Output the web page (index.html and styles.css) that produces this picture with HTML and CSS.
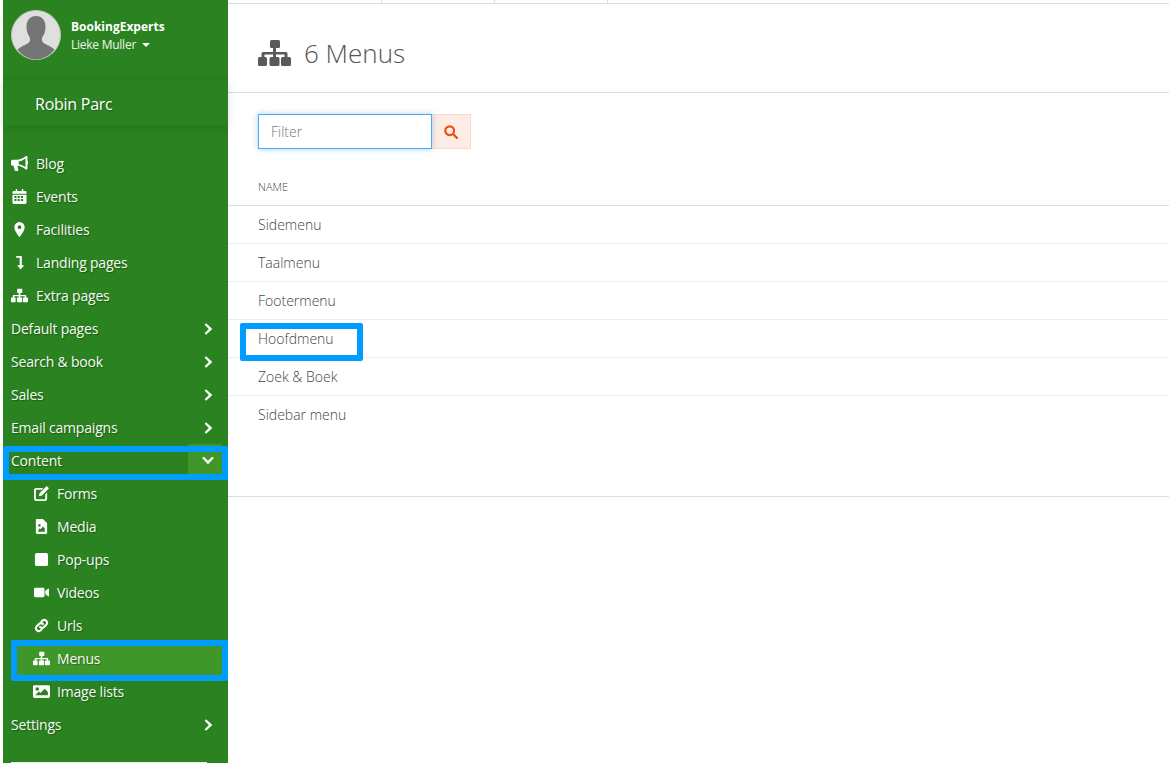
FILE: index.html
```html
<!DOCTYPE html>
<html lang="en">
<head>
<meta charset="utf-8">
<title>6 Menus</title>
<link rel="stylesheet" href="styles.css">
</head>
<body>
<svg class="defs" aria-hidden="true">
  <symbol id="i-sitemap" viewBox="0 0 33 26">
    <path d="M13.500 0h7a1.500 1.500 0 0 1 1.500 1.500v5A1.500 1.500 0 0 1 20.500 8H18v4h10a1.500 1.500 0 0 1 1.500 1.500V17h2a1.500 1.500 0 0 1 1.500 1.500v6a1.500 1.500 0 0 1-1.500 1.500h-7a1.500 1.500 0 0 1-1.500-1.500v-6a1.500 1.500 0 0 1 1.500-1.500h2v-2.500H18V17h2a1.500 1.500 0 0 1 1.500 1.500v6A1.500 1.500 0 0 1 20 26h-7a1.500 1.500 0 0 1-1.500-1.500v-6A1.500 1.500 0 0 1 13 17h2v-2.500H6.500V17h1a1.500 1.500 0 0 1 1.500 1.500v6A1.500 1.500 0 0 1 7.500 26h-6A1.500 1.500 0 0 1 0 24.500v-6A1.500 1.500 0 0 1 1.500 17h2v-3.500A1.500 1.500 0 0 1 5 12h10V8h-1.500A1.500 1.500 0 0 1 12 6.500v-5A1.500 1.500 0 0 1 13.500 0z"/>
  </symbol>
  <symbol id="i-chev-r" viewBox="0 0 12 16">
    <path d="M2.500 1 10 8l-7.500 7L.8 13l5-5-5-5z"/>
  </symbol>
  <symbol id="i-chev-d" viewBox="0 0 16 12">
    <path d="M1 2.500 3 .8l5 5 5-5 2 1.700L8 10z"/>
  </symbol>
</svg>

<div class="app">
  <aside class="sidebar">
    <header class="profile">
      <svg class="avatar" viewBox="0 0 50 50" role="img" aria-label="Avatar">
        <circle cx="25" cy="25" r="24.500" fill="#dfdfdf" stroke="#bcc9b6"/>
        <path d="M25 6c6 0 9.500 4.500 9.500 10.500 0 4-1 7.500-3 10.500-1 1.500-.8 4 .5 5.500 3 2.500 8.500 4 11.500 7A24.500 24.500 0 0 1 25 49.500 24.500 24.500 0 0 1 6.500 39.500c3-3 8.500-4.500 11.500-7 1.300-1.500 1.500-4 .5-5.500-2-3-3-6.500-3-10.500C15.500 10.500 19 6 25 6z" fill="#757575"/>
      </svg>
      <div class="who">
        <div class="company">BookingExperts</div>
        <div class="user">Lieke Muller <span class="caret"></span></div>
      </div>
    </header>

    <div class="park">Robin Parc</div>

    <nav class="nav">
      <a class="item">
        <svg class="ico" viewBox="0 0 16 14"><path d="M14 0h.6c.5 0 .9.400.9.900V4.700a1.800 1.800 0 0 1 0 3.200v3.800c0 .5-.4.900-.9.900H14c-2.300-2-5-3.300-8-3.500L7 13c.1.600-.3 1-.8 1H4.300c-.4 0-.7-.2-.8-.6L2.400 9.100H1.500C.7 9.100 0 8.400 0 7.600V5c0-.8.700-1.500 1.500-1.500H6C9 3.300 11.700 2 14 0zm-.4 2.200C11.700 3.600 9.600 4.600 7.300 5v2.600c2.300.4 4.400 1.400 6.300 2.800z" fill-rule="evenodd"/></svg>
        <span>Blog</span>
      </a>
      <a class="item">
        <svg class="ico" viewBox="0 0 16 16"><path d="M4 0h1.500v2h5V0H12v2h2.200c.7 0 1.300.6 1.300 1.300V5H.5V3.300C.5 2.600 1.100 2 1.800 2H4zM.5 6h15v8.700c0 .7-.6 1.300-1.300 1.300H1.800c-.7 0-1.300-.6-1.300-1.300zm2 1.500v2h2.300v-2zm3.500 0v2h2.300v-2zm3.500 0v2h2.300v-2zm-7 3.200v2h2.300v-2zm3.500 0v2h2.300v-2zm3.500 0v2h2.300v-2z" fill-rule="evenodd"/></svg>
        <span>Events</span>
      </a>
      <a class="item">
        <svg class="ico" viewBox="0 0 16 16"><path d="M8 0a5.500 5.500 0 0 1 5.500 5.500C13.500 9 10 13.500 8 16 6 13.500 2.500 9 2.500 5.500A5.500 5.500 0 0 1 8 0zm0 3.500a2 2 0 1 0 0 4 2 2 0 0 0 0-4z" fill-rule="evenodd"/></svg>
        <span>Facilities</span>
      </a>
      <a class="item">
        <svg class="ico" viewBox="0 0 16 16"><path d="M4.500 1h6v10H13l-3.800 4.500L5.500 11h2.700V3H4.500z"/></svg>
        <span>Landing pages</span>
      </a>
      <a class="item">
        <svg class="ico"><use href="#i-sitemap"/></svg>
        <span>Extra pages</span>
      </a>
      <a class="item parent"><span>Default pages</span><svg class="chev"><use href="#i-chev-r"/></svg></a>
      <a class="item parent"><span>Search &amp; book</span><svg class="chev"><use href="#i-chev-r"/></svg></a>
      <a class="item parent"><span>Sales</span><svg class="chev"><use href="#i-chev-r"/></svg></a>
      <a class="item parent"><span>Email campaigns</span><svg class="chev"><use href="#i-chev-r"/></svg></a>
      <a class="item parent open">
        <span>Content</span>
        <span class="toggle"><svg class="chev-d"><use href="#i-chev-d"/></svg></span>
        <span class="mark mark-content"></span>
      </a>
      <a class="item sub">
        <svg class="ico" viewBox="0 0 16 16"><path d="M2.300 2H10L8 4H2.800c-.4 0-.8.400-.8.800v8.400c0 .4.400.8.800.8h8.400c.4 0 .8-.4.800-.8V9l2-2v6.700c0 1.300-1 2.300-2.300 2.300H2.300C1 16 0 15 0 13.700V4.300C0 3 1 2 2.300 2zM13.500 0 16 2.500 8.500 10l-3.300.8.800-3.300z"/></svg>
        <span>Forms</span>
      </a>
      <a class="item sub">
        <svg class="ico" viewBox="0 0 16 16"><path d="M3 0h6.500L14 4.500v10.200c0 .7-.6 1.300-1.300 1.300H3.300C2.600 16 2 15.400 2 14.700V1c0-.6.500-1 1-1zm1.500 5.500v2.500h2.500V5.500zM4 13.500h7.500V10L9.500 8 7 11 5.800 9.800z" fill-rule="evenodd"/></svg>
        <span>Media</span>
      </a>
      <a class="item sub">
        <svg class="ico" viewBox="0 0 16 16"><rect x="1" y="1" width="14" height="14" rx="2"/></svg>
        <span>Pop-ups</span>
      </a>
      <a class="item sub">
        <svg class="ico" viewBox="0 0 16 16"><path d="M1.500 3h8.200c.8 0 1.500.7 1.500 1.500v7c0 .8-.7 1.500-1.500 1.500H1.500C.7 13 0 12.300 0 11.500v-7C0 3.700.7 3 1.500 3zM12 6.500 15 4c.4-.3 1-.1 1 .5v7c0 .6-.6.8-1 .5l-3-2.500z"/></svg>
        <span>Videos</span>
      </a>
      <a class="item sub">
        <svg class="ico ico-line" viewBox="0 0 16 16"><path d="M6.500 9.500a3 3 0 0 0 4.200 0l2.600-2.600a3 3 0 0 0-4.200-4.200L8 3.800"/><path d="M9.500 6.500a3 3 0 0 0-4.200 0L2.700 9.100a3 3 0 0 0 4.200 4.200L8 12.200"/></svg>
        <span>Urls</span>
      </a>
      <a class="item sub active">
        <svg class="ico"><use href="#i-sitemap"/></svg>
        <span>Menus</span>
        <span class="mark mark-menus"></span>
      </a>
      <a class="item sub">
        <svg class="ico" viewBox="0 0 16 14"><path d="M1.300 1h13.400c.7 0 1.300.6 1.300 1.300v9.400c0 .7-.6 1.300-1.300 1.300H1.300C.6 13 0 12.400 0 11.700V2.300C0 1.600.6 1 1.300 1zM2 10.500h12V7.500L11 4.500 7 8.500 5.500 7zM4 3a1.700 1.700 0 1 0 0 3.400A1.700 1.700 0 0 0 4 3z" fill-rule="evenodd"/></svg>
        <span>Image lists</span>
      </a>
      <a class="item parent"><span>Settings</span><svg class="chev"><use href="#i-chev-r"/></svg></a>
    </nav>
    <div class="foot-line"></div>
  </aside>

  <main class="main">
    <div class="tabs">
      <span class="tab"></span>
      <span class="tab"></span>
      <span class="tab"></span>
    </div>
    <header class="title-bar">
      <svg class="title-ico"><use href="#i-sitemap"/></svg>
      <h1>6 Menus</h1>
    </header>
    <div class="filter">
      <input class="filter-input" type="text" placeholder="Filter" aria-label="Filter">
      <button class="filter-btn" type="button" aria-label="Search">
        <svg viewBox="0 0 16 16" width="14" height="14" fill="none" stroke="#ec4e15" stroke-width="2.500"><circle cx="6.500" cy="6.500" r="5"/><path d="M10.300 10.300 15 15" stroke-linecap="round"/></svg>
      </button>
    </div>
    <div class="table">
      <div class="thead">NAME</div>
      <div class="row">Sidemenu</div>
      <div class="row">Taalmenu</div>
      <div class="row">Footermenu</div>
      <div class="row">Hoofdmenu<span class="mark mark-row"></span></div>
      <div class="row">Zoek &amp; Boek</div>
      <div class="row last">Sidebar menu</div>
    </div>
  </main>
</div>
</body>
</html>
```

FILE: styles.css
```css
* {
  box-sizing: border-box;
}

html,
body {
  height: 100%;
}

body {
  margin: 0;
  background: #fff;
  font-family: "Open Sans", sans-serif;
  overflow: hidden;
}

.defs {
  display: none;
}

.app {
  display: flex;
  height: 763px;
  padding-left: 3px;
}

/* Sidebar */
.sidebar {
  width: 225px;
  flex: none;
  display: flex;
  flex-direction: column;
  background: #2a8220;
  color: #fff;
  position: relative;
}

.profile {
  display: flex;
  gap: 10px;
  padding: 10px 0 0 8px;
  height: 80px;
  flex: none;
}

.avatar {
  width: 50px;
  height: 50px;
  flex: none;
}

.who {
  padding-top: 8px;
}

.company {
  font-size: 12px;
  line-height: 18px;
  font-weight: 700;
}

.user {
  font-size: 12px;
  line-height: 18px;
  letter-spacing: -0.25px;
  color: #eef5ec;
  display: flex;
  align-items: center;
  gap: 6px;
}

.caret {
  width: 0;
  height: 0;
  border-left: 4.500px solid transparent;
  border-right: 4.500px solid transparent;
  border-top: 4px solid #fff;
}

.park {
  height: 46px;
  flex: none;
  padding-left: 32px;
  font-size: 16px;
  line-height: 48px;
  background: #2a8220;
  box-shadow: 0 2px 8px rgba(0, 0, 0, .12);
  text-shadow: 1px 1px 1px rgba(0, 0, 0, .25);
  letter-spacing: -0.25px;
}

.nav {
  display: flex;
  flex-direction: column;
  padding-top: 21px;
}

.item {
  position: relative;
  display: flex;
  align-items: center;
  height: 33px;
  flex: none;
  padding-left: 8px;
  gap: 8px;
  font-size: 14px;
  letter-spacing: -0.2px;
  color: #f6faf5;
  text-shadow: 1px 1px 1px rgba(0, 0, 0, .3);
}

.ico {
  width: 17px;
  height: 15px;
  flex: none;
  fill: #fff;
}

.ico-line {
  fill: none;
  stroke: #fff;
  stroke-width: 2.200;
  stroke-linecap: round;
}

.parent {
  justify-content: space-between;
  padding-right: 14px;
}

.chev {
  width: 10px;
  height: 14px;
  fill: #fff;
}

.open {
  padding-right: 6px;
}

.toggle {
  width: 34px;
  height: 34px;
  background: #3f9629;
  display: flex;
  align-items: center;
  justify-content: center;
  padding-left: 6px;
}

.chev-d {
  width: 14px;
  height: 10px;
  fill: #fff;
}

.sub {
  padding-left: 30px;
  gap: 7px;
}

.active {
  background: #3f9629;
  margin-left: 11px;
  margin-right: 3px;
  padding-left: 19px;
}

.foot-line {
  position: absolute;
  left: 8px;
  bottom: 0;
  width: 196px;
  height: 1px;
  background: #e6efe4;
}

/* Annotation frames */
.mark {
  position: absolute;
  border: 6px solid #009dff;
  border-radius: 2px;
  pointer-events: none;
}

.mark-content {
  left: 0;
  right: 0;
  top: 2px;
  height: 34px;
}

.mark-menus {
  left: -3px;
  right: -3px;
  top: -2px;
  height: 41px;
}

.mark-row {
  left: 12px;
  top: 3px;
  width: 123px;
  height: 38px;
}

/* Main */
.main {
  flex: 1;
  min-width: 0;
  display: flex;
  flex-direction: column;
}

.tabs {
  display: flex;
  height: 4px;
  flex: none;
  padding-left: 41px;
  border-bottom: 1px solid #ddd;
}

.tab {
  width: 113px;
  height: 3px;
  border-right: 1px solid #ddd;
}

.title-bar {
  display: flex;
  align-items: center;
  gap: 13px;
  height: 89px;
  flex: none;
  padding: 10px 0 0 30px;
  border-bottom: 1px solid #ddd;
}

.title-ico {
  width: 33px;
  height: 26px;
  fill: #5a5a5a;
}

h1 {
  margin: 0;
  font-size: 26px;
  font-weight: 300;
  color: #555;
}

.filter {
  display: flex;
  padding: 21px 0 0 30px;
  flex: none;
}

.filter-input {
  width: 174px;
  height: 35px;
  padding: 0 12px;
  border: 1px solid #52a8ec;
  border-radius: 0;
  outline: none;
  background: #fff;
  font: 300 14px "Open Sans", sans-serif;
  box-shadow: 0 0 6px rgba(82, 168, 236, .5);
  position: relative;
}

.filter-input::placeholder {
  color: #777;
}

.filter-btn {
  width: 39px;
  height: 35px;
  padding: 0;
  border: 1px solid #fdd9c9;
  border-left: 0;
  background: #fdece5;
  display: flex;
  align-items: center;
  justify-content: center;
}

.table {
  display: flex;
  flex-direction: column;
  padding-top: 19px;
  height: 348px;
  flex: none;
  border-bottom: 1px solid #ddd;
}

.thead {
  height: 38px;
  padding: 10px 0 0 30px;
  font-size: 11px;
  font-weight: 300;
  line-height: 18px;
  color: #444;
  border-bottom: 1px solid #ddd;
}

.row {
  position: relative;
  height: 38px;
  flex: none;
  padding-left: 30px;
  font-size: 14px;
  font-weight: 300;
  line-height: 37px;
  color: #444;
  border-bottom: 1px solid #eee;
}

.last {
  border-bottom: 0;
}
```
